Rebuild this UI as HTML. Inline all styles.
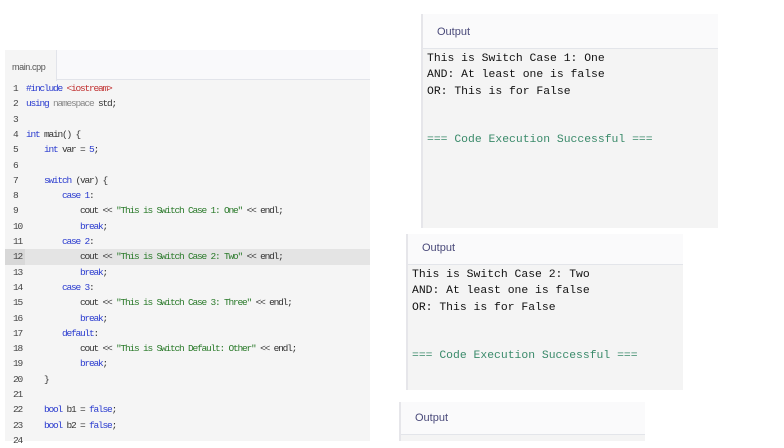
<!DOCTYPE html>
<html><head><meta charset="utf-8"><style>
*{margin:0;padding:0;box-sizing:border-box}
body{width:784px;height:441px;background:#fff;position:relative;overflow:hidden;font-family:"Liberation Sans",sans-serif}
.ed{position:absolute;left:5px;top:50px;width:365px;height:391px;background:#f5f5f5}
.tabbar{height:30px;border-bottom:1px solid #e2e4ea;background:#f9f9fb;position:relative}
.tab{position:absolute;left:0;top:0;width:52px;height:31px;border-right:1px solid #e2e4ea;background:#f5f5f5;font-size:9px;color:#555;padding:12px 0 0 7px;letter-spacing:-.4px}
.ln{position:absolute;left:0;width:365px;height:15.3px;font-family:"Liberation Mono",monospace;font-size:9.5px;letter-spacing:-1.2px;line-height:15.3px;color:#333;white-space:pre}
.ln .n{position:absolute;left:8px;color:#444;width:14px}
.ln .c{position:absolute;left:21px}
.hl{background:#e4e4e4}
.hl .n{background:#d8d8d8;left:0;padding-left:8px;width:20px}
.k{color:#2a3bcf}.s{color:#2a7a2a}.r{color:#c03030}.g{color:#888}
.out{position:absolute;background:#f4f4f4;border-left:2px solid #e6e6ea}
.oh{background:#fafafb;border-bottom:1px solid #e3e5ea;font-size:11px;color:#4a4a7a;padding-left:14px}
.ot{font-family:"Liberation Mono",monospace;font-size:11.4px;color:#111;padding-left:4px;line-height:16.3px;white-space:pre}
.ok{color:#3a8a6a}
</style></head><body>
<div class="ed">
<div class="tabbar"><div class="tab">main.cpp</div></div>
<div class="ln" style="top:31px"><span class="n">1</span><span class="c"><span class="k">#include</span> <span class="r">&lt;iostream&gt;</span></span></div>
<div class="ln" style="top:46.3px"><span class="n">2</span><span class="c"><span class="k">using</span> <span class="g">namespace</span> std;</span></div>
<div class="ln" style="top:61.6px"><span class="n">3</span></div>
<div class="ln" style="top:76.9px"><span class="n">4</span><span class="c"><span class="k">int</span> main() {</span></div>
<div class="ln" style="top:92.2px"><span class="n">5</span><span class="c">    <span class="k">int</span> var = <span class="k">5</span>;</span></div>
<div class="ln" style="top:107.5px"><span class="n">6</span></div>
<div class="ln" style="top:122.8px"><span class="n">7</span><span class="c">    <span class="k">switch</span> (var) {</span></div>
<div class="ln" style="top:138.1px"><span class="n">8</span><span class="c">        <span class="k">case 1</span>:</span></div>
<div class="ln" style="top:153.4px"><span class="n">9</span><span class="c">            cout &lt;&lt; <span class="s">"This is Switch Case 1: One"</span> &lt;&lt; endl;</span></div>
<div class="ln" style="top:168.7px"><span class="n">10</span><span class="c">            <span class="k">break</span>;</span></div>
<div class="ln" style="top:184px"><span class="n">11</span><span class="c">        <span class="k">case 2</span>:</span></div>
<div class="ln hl" style="top:199.3px"><span class="n">12</span><span class="c">            cout &lt;&lt; <span class="s">"This is Switch Case 2: Two"</span> &lt;&lt; endl;</span></div>
<div class="ln" style="top:214.6px"><span class="n">13</span><span class="c">            <span class="k">break</span>;</span></div>
<div class="ln" style="top:229.9px"><span class="n">14</span><span class="c">        <span class="k">case 3</span>:</span></div>
<div class="ln" style="top:245.2px"><span class="n">15</span><span class="c">            cout &lt;&lt; <span class="s">"This is Switch Case 3: Three"</span> &lt;&lt; endl;</span></div>
<div class="ln" style="top:260.5px"><span class="n">16</span><span class="c">            <span class="k">break</span>;</span></div>
<div class="ln" style="top:275.8px"><span class="n">17</span><span class="c">        <span class="k">default</span>:</span></div>
<div class="ln" style="top:291.1px"><span class="n">18</span><span class="c">            cout &lt;&lt; <span class="s">"This is Switch Default: Other"</span> &lt;&lt; endl;</span></div>
<div class="ln" style="top:306.4px"><span class="n">19</span><span class="c">            <span class="k">break</span>;</span></div>
<div class="ln" style="top:321.7px"><span class="n">20</span><span class="c">    }</span></div>
<div class="ln" style="top:337px"><span class="n">21</span></div>
<div class="ln" style="top:352.3px"><span class="n">22</span><span class="c">    <span class="k">bool</span> b1 = <span class="k">false</span>;</span></div>
<div class="ln" style="top:367.6px"><span class="n">23</span><span class="c">    <span class="k">bool</span> b2 = <span class="k">false</span>;</span></div>
<div class="ln" style="top:382.9px"><span class="n">24</span></div>
</div>

<div class="out" style="left:421px;top:14px;width:297px;height:214px">
<div class="oh" style="height:35px;line-height:36px">Output</div>
<div class="ot" style="padding-top:2px">This is Switch Case 1: One
AND: At least one is false
OR: This is for False


<span class="ok">=== Code Execution Successful ===</span></div>
</div>

<div class="out" style="left:406px;top:234px;width:277px;height:156px">
<div class="oh" style="height:31px;line-height:29px">Output</div>
<div class="ot" style="padding-top:2px">This is Switch Case 2: Two
AND: At least one is false
OR: This is for False


<span class="ok">=== Code Execution Successful ===</span></div>
</div>

<div class="out" style="left:399px;top:402px;width:246px;height:39px">
<div class="oh" style="height:33px;line-height:33px">Output</div>
</div>
</body></html>
